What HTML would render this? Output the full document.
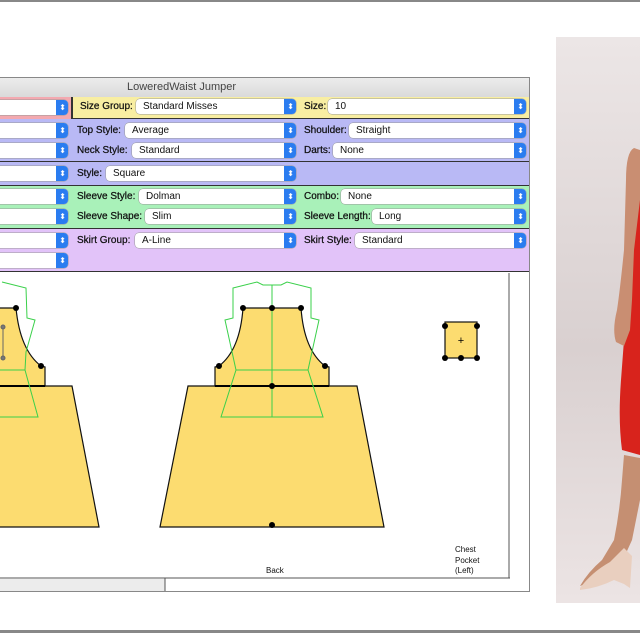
<!DOCTYPE html>
<html><head><meta charset="utf-8"><style>
*{margin:0;padding:0;box-sizing:border-box}
body{width:640px;height:633px;background:#fff;position:relative;overflow:hidden;font-family:"Liberation Sans",sans-serif}
.abs{position:absolute}
.row{position:absolute;left:0;width:529px}
.lbl{position:absolute;font-size:10px;color:#111;line-height:12px;-webkit-text-stroke:0.25px #111}
.dd{position:absolute;height:15px;background:#fff;border-radius:4px;box-shadow:0 0 0 0.5px #999;font-size:10px;line-height:15px;padding-left:7px;color:#111}
.dd:after{content:"";position:absolute;right:0;top:0;width:12px;height:15px;background:#2a7cf0;border-radius:0 4px 4px 0}
.dd:before{content:"⬍";position:absolute;right:2px;top:0;color:#fff;font-size:8px;z-index:2}
</style></head><body>
<div class="abs" style="left:0;top:0;width:640px;height:2px;background:#888"></div>
<div class="abs" style="left:0;top:630px;width:640px;height:3px;background:#888"></div>

<div class="abs" style="left:0;top:77px;width:530px;height:515px;border:1px solid #888;border-left:none;background:#fff"></div>
<div class="abs" style="left:0;top:78px;width:529px;height:19px;background:linear-gradient(#ececec,#dadada)"></div>
<div class="abs" style="left:127px;top:78px;font-size:11px;line-height:19px;color:#444">LoweredWaist Jumper</div>

<div class="row" style="top:97px;height:22px;background:#f8eea2;border-bottom:1px solid #333"></div>
<div class="abs" style="left:0;top:97px;width:73px;height:22px;background:#f3a9b0;border-right:2px solid #333"></div>
<div class="row" style="top:119px;height:43px;background:#b9b9f5;border-bottom:1px solid #333"></div>
<div class="row" style="top:162px;height:24px;background:#b9b9f5;border-bottom:1px solid #333"></div>
<div class="row" style="top:186px;height:43px;background:#a9f1b9;border-bottom:1px solid #333"></div>
<div class="row" style="top:229px;height:43px;background:#e2c3f9;border-bottom:1px solid #333"></div>

<div class="dd" style="left:-6px;top:100px;width:74px"></div>
<div class="lbl" style="left:80px;top:101px">Size Group:</div><div class="dd" style="left:136px;top:99px;width:160px">Standard Misses</div>
<div class="lbl" style="left:304px;top:101px">Size:</div><div class="dd" style="left:328px;top:99px;width:198px">10</div>

<div class="dd" style="left:-6px;top:123px;width:74px"></div>
<div class="lbl" style="left:77px;top:125px">Top Style:</div><div class="dd" style="left:125px;top:123px;width:171px">Average</div>
<div class="lbl" style="left:304px;top:125px">Shoulder:</div><div class="dd" style="left:349px;top:123px;width:177px">Straight</div>

<div class="dd" style="left:-6px;top:143px;width:74px"></div>
<div class="lbl" style="left:77px;top:145px">Neck Style:</div><div class="dd" style="left:132px;top:143px;width:164px">Standard</div>
<div class="lbl" style="left:304px;top:145px">Darts:</div><div class="dd" style="left:333px;top:143px;width:193px">None</div>

<div class="dd" style="left:-6px;top:166px;width:74px"></div>
<div class="lbl" style="left:77px;top:168px">Style:</div><div class="dd" style="left:106px;top:166px;width:190px">Square</div>

<div class="dd" style="left:-6px;top:189px;width:74px"></div>
<div class="lbl" style="left:77px;top:191px">Sleeve Style:</div><div class="dd" style="left:139px;top:189px;width:157px">Dolman</div>
<div class="lbl" style="left:304px;top:191px">Combo:</div><div class="dd" style="left:341px;top:189px;width:185px">None</div>

<div class="dd" style="left:-6px;top:209px;width:74px"></div>
<div class="lbl" style="left:77px;top:211px">Sleeve Shape:</div><div class="dd" style="left:145px;top:209px;width:151px">Slim</div>
<div class="lbl" style="left:304px;top:211px">Sleeve Length:</div><div class="dd" style="left:372px;top:209px;width:154px">Long</div>

<div class="dd" style="left:-6px;top:233px;width:74px"></div>
<div class="lbl" style="left:77px;top:235px">Skirt Group:</div><div class="dd" style="left:135px;top:233px;width:161px">A-Line</div>
<div class="lbl" style="left:304px;top:235px">Skirt Style:</div><div class="dd" style="left:355px;top:233px;width:171px">Standard</div>

<div class="dd" style="left:-6px;top:253px;width:74px"></div>

<svg class="abs" style="left:0;top:273px" width="530" height="319" viewBox="0 273 530 319">
<g stroke="#111" stroke-width="1.2" fill="#fcdc70">
<path d="M-5 386 L72 386 L99 527 L-5 527 Z"/>
<path d="M-5 308 L16 308 Q20 350 41 366 L45 367 L45 386 L-5 386 Z"/>
<path d="M188 386 L357 386 L384 527 L160 527 Z"/>
<path d="M243 308 L301 308 Q304 350 325 366 L329 367 L329 386 L215 386 L215 367 L219 366 Q240 350 243 308 Z"/>
<rect x="445" y="322" width="32" height="36"/>
</g>
<line x1="0" y1="386" x2="45" y2="386" stroke="#000" stroke-width="2"/>
<line x1="215" y1="386" x2="329" y2="386" stroke="#000" stroke-width="2"/>
<g stroke="#3ad04a" stroke-width="1" fill="none">
<path d="M2 282 L26 288 L27 318 L35 320 L26 352 L25 370 L38 417 L0 417"/>
<line x1="0" y1="370" x2="25" y2="370"/>
<path d="M233 288 L257 282 L263 285 L281 285 L287 282 L311 288 L311 318 L319 320 L308 370 L323 417 L221 417 L236 370 L225 320 L233 318 Z"/>
<line x1="236" y1="370" x2="308" y2="370"/>
<line x1="272" y1="285" x2="272" y2="417"/>
</g>
<g stroke="#666" fill="#777"><line x1="3" y1="327" x2="3" y2="358"/><circle cx="3" cy="327" r="2"/><circle cx="3" cy="358" r="2"/></g>
<g fill="#000">
<circle cx="16" cy="308" r="3"/><circle cx="41" cy="366" r="3"/>
<circle cx="243" cy="308" r="3"/><circle cx="272" cy="308" r="3"/><circle cx="301" cy="308" r="3"/>
<circle cx="219" cy="366" r="3"/><circle cx="325" cy="366" r="3"/><circle cx="272" cy="386" r="3"/><circle cx="272" cy="525" r="3"/>
<circle cx="445" cy="326" r="3"/><circle cx="477" cy="326" r="3"/><circle cx="445" cy="358" r="3"/><circle cx="461" cy="358" r="3"/><circle cx="477" cy="358" r="3"/>
</g>
<text x="461" y="344" font-size="11" text-anchor="middle" font-family="Liberation Sans">+</text>
<g font-family="Liberation Sans" font-size="8" fill="#111">
<text x="266" y="573">Back</text>
<text x="455" y="552">Chest</text><text x="455" y="563">Pocket</text><text x="455" y="573">(Left)</text>
</g>
<line x1="509" y1="273" x2="509" y2="578" stroke="#555" stroke-width="1"/>
<line x1="0" y1="578" x2="510" y2="578" stroke="#555" stroke-width="1"/>
<rect x="0" y="579" width="165" height="12" fill="#ececec"/>
<line x1="165" y1="578" x2="165" y2="591" stroke="#555"/>
</svg>

<svg class="abs" style="left:556px;top:37px" width="84" height="566" viewBox="556 37 84 566">
<defs><linearGradient id="bg" x1="0" y1="0" x2="0" y2="1"><stop offset="0" stop-color="#ece6e6"/><stop offset="0.55" stop-color="#d9d0d0"/><stop offset="1" stop-color="#ece4e4"/></linearGradient></defs>
<rect x="556" y="37" width="84" height="566" fill="url(#bg)"/>
<path d="M636 150 L640 150 L640 455 L622 450 Q618 420 621 380 L624 340 Z" fill="#d8231c"/>
<path d="M634 148 Q626 152 626 180 L624 250 Q620 290 617 310 Q612 330 616 342 L624 346 L630 330 L632 300 L634 250 L640 200 L640 150 Z" fill="#c98e72"/>
<path d="M624 455 L640 458 L640 500 L632 540 L622 562 L612 572 Q598 580 580 586 Q588 572 602 560 L614 540 Q620 510 622 480 Z" fill="#c58f72"/>
<path d="M580 588 Q592 572 610 562 L624 548 L632 556 L630 588 L624 584 L614 580 Q598 588 580 590 Z" fill="#e9cfbf"/>
</svg>
</body></html>
